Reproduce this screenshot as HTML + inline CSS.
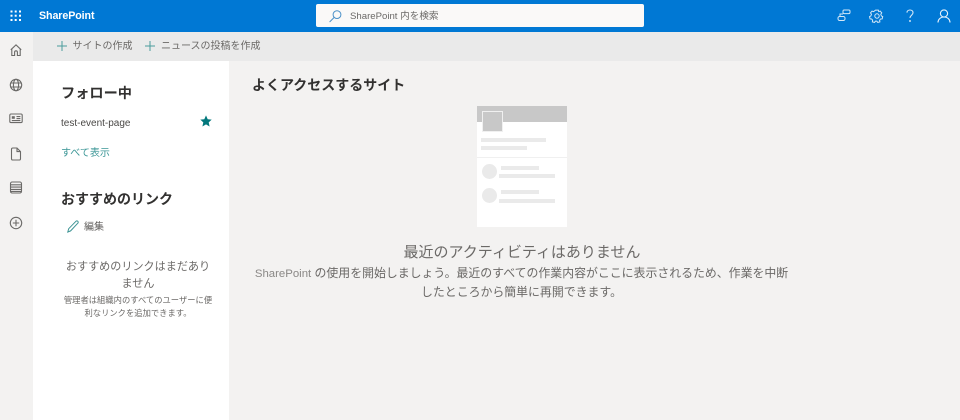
<!DOCTYPE html>
<html lang="ja">
<head>
<meta charset="utf-8">
<style>
html,body{margin:0;padding:0;width:960px;height:420px;overflow:hidden;background:#f3f2f1;font-family:"Liberation Sans","Noto Sans CJK JP",sans-serif;}
.a{position:absolute;white-space:nowrap;}
.c{position:absolute;text-align:center;white-space:nowrap;}
svg{position:absolute;overflow:visible;}
</style>
</head>
<body>
<div class="a" style="left:0;top:0;width:960px;height:32px;background:#0078d4"></div>
<div class="a" style="left:33px;top:32px;width:927px;height:29px;background:#eaeaea"></div>
<div class="a" style="left:33px;top:61px;width:196px;height:359px;background:#fff"></div>

<svg style="left:10px;top:10px" width="12" height="12" fill="#fff"><g>
<rect x="0.5" y="0.5" width="2" height="2"/><rect x="4.7" y="0.5" width="2" height="2"/><rect x="9" y="0.5" width="2" height="2"/>
<rect x="0.5" y="4.7" width="2" height="2"/><rect x="4.7" y="4.7" width="2" height="2"/><rect x="9" y="4.7" width="2" height="2"/>
<rect x="0.5" y="9" width="2" height="2"/><rect x="4.7" y="9" width="2" height="2"/><rect x="9" y="9" width="2" height="2"/></g></svg>
<div class="a" style="left:39px;top:9px;font-size:10.7px;line-height:14px;font-weight:700;color:#fff;letter-spacing:-.1px">SharePoint</div>

<div class="a" style="left:316px;top:4px;width:328px;height:23px;background:#faf9f8;border-radius:2px"></div>
<svg style="left:329px;top:10px" width="13" height="13" fill="none" stroke="#4a90c8" stroke-width="1"><circle cx="8" cy="4.6" r="3.9"/><path d="M5.2 7.4L0.6 12"/></svg>
<div class="a" style="left:350px;top:9px;font-size:9.6px;line-height:15px;color:#6b6967">SharePoint 内を検索</div>

<svg style="left:837px;top:9px" width="14" height="14" fill="none" stroke="#d5e8f7" stroke-width="1"><rect x="6" y="1" width="7" height="3.6" rx="1.2"/><rect x="1" y="7.5" width="7" height="4" rx="1.6"/><path d="M3 7.5V5H6M7 4.6V5"/></svg>
<svg style="left:870px;top:9px" width="14" height="14" fill="none" stroke="#d5e8f7" stroke-width="1"><circle cx="7" cy="7" r="2.2"/><path d="M5.6 1h2.8l.4 1.6 1.5-.6 1.6 1.9-1 1.3.6 1.8 1.4.7-.6 2.3-1.6.1-1 1.3.3 1.6-2.2.6-1-1.3h-1.3l-1 1.3-2.2-.6.3-1.6-1-1.3-1.6-.1-.6-2.3 1.4-.7.6-1.8-1-1.3 1.6-1.9 1.5.6z" transform="translate(.1 .1) scale(.98)"/></svg>
<svg style="left:906px;top:9px" width="9" height="14" fill="none" stroke="#d5e8f7" stroke-width="1.1"><path d="M1 3.6C1 1.9 2.4 1 4 1s3 1 3 2.8c0 2.4-3 2.4-3 5.2"/><circle cx="4" cy="12" r=".4"/></svg>
<svg style="left:937px;top:9px" width="14" height="14" fill="none" stroke="#e6f1fb" stroke-width="1.1"><circle cx="7" cy="4.5" r="3.6"/><path d="M1 13.5C1 10.5 3.4 8 7 8s6 2.5 6 5.5"/></svg>

<svg style="left:10px;top:44px" width="12" height="12" fill="none" stroke="#6b6a68" stroke-width="1.1"><path d="M.8 5.8L6 .9l5.2 4.9M1.8 5v6.5H4.6V8.2a1.4 1.4 0 0 1 2.8 0v3.3h2.8V5"/></svg>
<svg style="left:9px;top:78px" width="14" height="14" fill="none" stroke="#6b6a68" stroke-width="1.1"><circle cx="7" cy="7" r="5.7"/><ellipse cx="7" cy="7" rx="2.6" ry="5.7"/><path d="M1.6 5H12.4M1.6 9H12.4"/></svg>
<svg style="left:9px;top:113px" width="14" height="11" fill="none" stroke="#6b6a68" stroke-width="1.1"><rect x=".8" y="1" width="12.4" height="8.6" rx="1.2"/><rect x="2.8" y="3.2" width="3" height="2.6" fill="#6b6a68" stroke="none"/><path d="M7.5 3.6H11.4M7.5 5.6H11.4M2.8 7.6H11.4"/></svg>
<svg style="left:10px;top:147px" width="12" height="14" fill="none" stroke="#6b6a68" stroke-width="1.1"><path d="M1.5 2.3a1.3 1.3 0 0 1 1.3-1.3H7l3.5 3.6v7.1a1.3 1.3 0 0 1-1.3 1.3H2.8a1.3 1.3 0 0 1-1.3-1.3zM7 1v3.6h3.5"/></svg>
<svg style="left:9px;top:181px" width="14" height="13" fill="none" stroke="#6b6a68" stroke-width="1.1"><rect x="1.5" y="1" width="11" height="11" rx="1.6"/><path d="M1.5 3.8H12.5M1.5 6.1H12.5M1.5 8.4H12.5M1.5 10.4H12.5"/></svg>
<svg style="left:9px;top:216px" width="14" height="14" fill="none" stroke="#6b6a68" stroke-width="1.1"><circle cx="7" cy="7" r="5.7"/><path d="M7 3.8V10.2M3.8 7H10.2"/></svg>

<svg style="left:57px;top:41px" width="10" height="10" fill="none" stroke="#4b9c9c" stroke-width="1"><path d="M5 0V10M0 5H10"/></svg>
<div class="a" style="left:72.5px;top:39px;font-size:10px;line-height:15px;color:#6b6967">サイトの作成</div>
<svg style="left:145px;top:41px" width="10" height="10" fill="none" stroke="#4b9c9c" stroke-width="1"><path d="M5 0V10M0 5H10"/></svg>
<div class="a" style="left:161px;top:39px;font-size:10px;line-height:15px;color:#6b6967">ニュースの投稿を作成</div>

<div class="a" style="left:61px;top:84px;font-size:14.2px;line-height:20px;font-weight:700;color:#323130">フォロー中</div>
<div class="a" style="left:61px;top:115.5px;font-size:10px;line-height:15px;color:#4a4846">test-event-page</div>
<svg style="left:200px;top:115px" width="12" height="12" fill="#03787c"><path d="M6 .4l1.7 3.8 4 .4-3 2.8.9 4.1L6 9.4 2.4 11.5l.9-4.1-3-2.8 4-.4z"/></svg>
<div class="a" style="left:61px;top:146px;font-size:10px;line-height:15px;color:#3b9696">すべて表示</div>

<div class="a" style="left:61px;top:189px;font-size:14px;line-height:20px;font-weight:700;color:#323130">おすすめのリンク</div>
<svg style="left:67px;top:220px" width="12" height="13" fill="none" stroke="#3d9494" stroke-width="1"><path d="M.8 12l.9-3.3L8.9 1.3a1.3 1.3 0 0 1 1.9 0 1.3 1.3 0 0 1 0 1.9L3.6 10.9z"/></svg>
<div class="a" style="left:84px;top:220px;font-size:10px;line-height:15px;color:#605e5c">編集</div>

<div class="c" style="left:33px;top:259px;width:210px;font-size:11.1px;line-height:17px;color:#6b6967"><div>おすすめのリンクはまだあり</div><div>ません</div></div>
<div class="c" style="left:33px;top:294px;width:210px;font-size:8.3px;line-height:12.7px;color:#6b6967"><div>管理者は組織内のすべてのユーザーに便</div><div>利なリンクを追加できます。</div></div>

<div class="a" style="left:252px;top:75px;font-size:14px;line-height:20px;font-weight:700;color:#323130">よくアクセスするサイト</div>

<div class="a" style="left:477px;top:106px;width:90px;height:121px;background:#fff"></div>
<div class="a" style="left:476.5px;top:106px;width:90.5px;height:16px;background:#c8c8c8"></div>
<div class="a" style="left:482px;top:111px;width:21px;height:21px;background:#c8c8c8;box-sizing:border-box;border:1px solid #f0f0f0"></div>
<div class="a" style="left:481px;top:138px;width:65px;height:4px;background:#eaeaea"></div>
<div class="a" style="left:481px;top:146px;width:46px;height:4px;background:#eaeaea"></div>
<div class="a" style="left:477px;top:157px;width:90px;height:1px;background:#f0f0f0"></div>
<div class="a" style="left:482px;top:164px;width:15px;height:15px;border-radius:50%;background:#eaeaea"></div>
<div class="a" style="left:501px;top:166px;width:38px;height:4px;background:#eaeaea"></div>
<div class="a" style="left:499px;top:174px;width:56px;height:4px;background:#eaeaea"></div>
<div class="a" style="left:482px;top:188px;width:15px;height:15px;border-radius:50%;background:#eaeaea"></div>
<div class="a" style="left:501px;top:190px;width:38px;height:4px;background:#eaeaea"></div>
<div class="a" style="left:499px;top:199px;width:56px;height:4px;background:#eaeaea"></div>

<div class="c" style="left:240px;top:242px;width:564px;font-size:15px;line-height:21px;color:#6b6967">最近のアクティビティはありません</div>
<div class="c" style="left:240px;top:263.5px;width:563px;font-size:11.9px;line-height:18.5px;color:#6b6967"><div><span style="color:#8a8886;font-size:11.4px">SharePoint</span> の使用を開始しましょう。最近のすべての作業内容がここに表示されるため、作業を中断</div><div>したところから簡単に再開できます。</div></div>
</body>
</html>
